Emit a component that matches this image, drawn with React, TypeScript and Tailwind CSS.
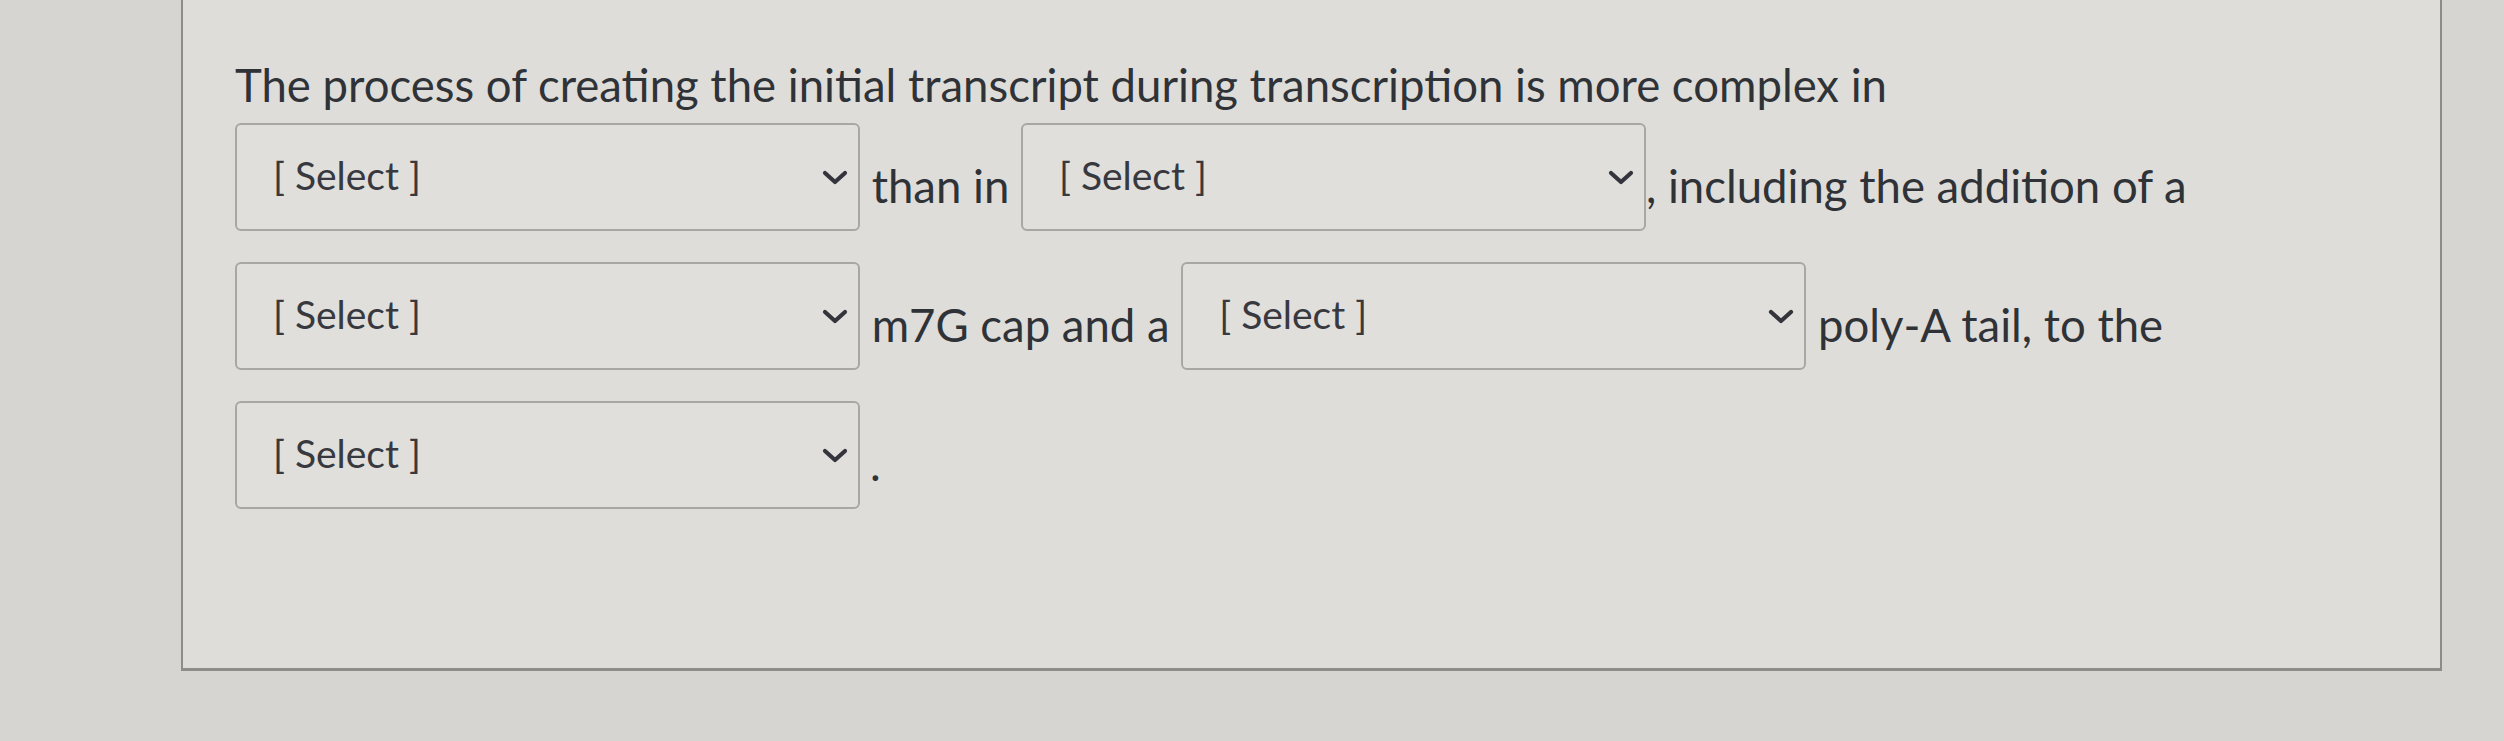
import { useState } from "react";

const options = ["[ Select ]", "eukaryotes", "prokaryotes", "5'", "3'", "mRNA", "tRNA"];

function Chevron() {
  return (
    <svg width="26" height="16" viewBox="0 0 26 16" className="shrink-0">
      <path d="M3 3 L13 12 L23 3" fill="none" stroke="#34343c" strokeWidth="4.2" strokeLinecap="round" strokeLinejoin="round" />
    </svg>
  );
}

function Dropdown({ value }: { value: string }) {
  return (
    <span className="inline-flex items-baseline justify-between w-[625px] h-[108px] mt-[10px] mb-[21px] pl-[36px] pr-[10px] pt-[31px] border-2 border-[#aaa7a2] rounded-[6px] bg-[#e0dfdb] align-[13px] text-[39px] text-[#38383f] leading-none">
      <span>{value}</span>
      <span className="self-start pt-[14px]">
        <Chevron />
      </span>
    </span>
  );
}

export default function App() {
  const [vals] = useState<string[]>([options[0], options[0], options[0], options[0], options[0]]);

  return (
    <div className="w-[2504px] h-[741px] bg-[#d7d5d1] overflow-hidden" style={{ fontFamily: "Lato, 'Open Sans', sans-serif" }}>
      <div className="ml-[181px] w-[2261px] h-[671px] border-x-2 border-b-[3px] border-[#8f8c88] bg-[#dfddd9] pl-[52px] pr-[20px] pt-[58px]">
        <p className="text-[45.5px] leading-[1.2] text-[#2f3338]">
          The process of creating the initial transcript during transcription is more complex in{" "}
          <Dropdown value={vals[0]} /> than in <Dropdown value={vals[1]} />, including the addition of a{" "}
          <Dropdown value={vals[2]} /> m7G cap and a <Dropdown value={vals[3]} /> poly-A tail, to the{" "}
          <Dropdown value={vals[4]} /><span className="ml-[10px]">.</span>
        </p>
      </div>
    </div>
  );
}
